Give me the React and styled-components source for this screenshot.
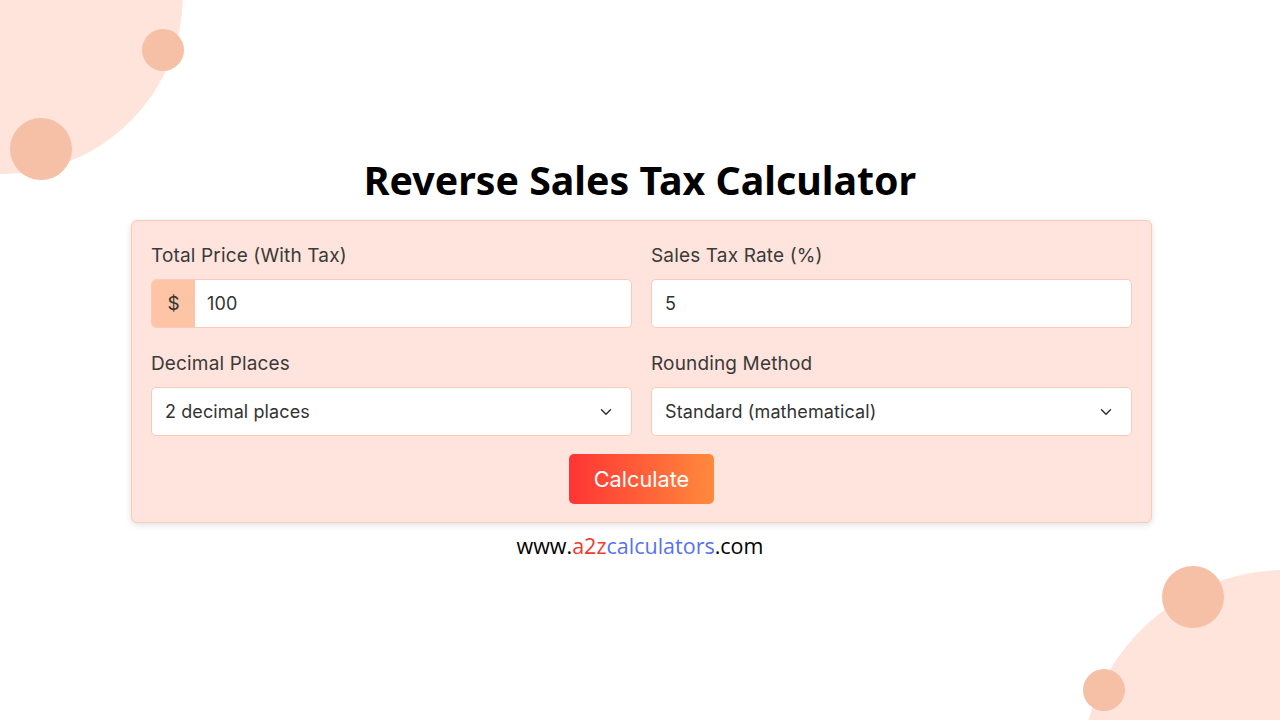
import React from "react";
import styled, { createGlobalStyle } from "styled-components";
import { ChevronDown } from "lucide-react";

const GlobalStyle = createGlobalStyle`
  html, body {
    margin: 0;
    padding: 0;
    background: #ffffff;
    font-family: "Inter", "Noto Sans", sans-serif;
  }
  * { box-sizing: border-box; }
`;

const Page = styled.div`
  position: relative;
  width: 1280px;
  height: 720px;
  overflow: hidden;
  display: flex;
  flex-direction: column;
  align-items: center;
  padding-top: 156px;
  background: #ffffff;
`;

const Blob = styled.div`
  position: absolute;
  border-radius: 50%;
  background: ${({ dark }) => (dark ? "#f5c0a5" : "#fee4da")};
  left: ${({ x, r }) => x - r}px;
  top: ${({ y, r }) => y - r}px;
  width: ${({ r }) => r * 2}px;
  height: ${({ r }) => r * 2}px;
`;

const Title = styled.h1`
  position: relative;
  margin: 0 0 16px;
  font-family: "Noto Sans", "Open Sans", sans-serif;
  font-weight: 700;
  font-size: 39.3px;
  line-height: 48px;
  color: #000000;
`;

const Card = styled.div`
  position: relative;
  width: 1021px;
  margin-left: 3px;
  background: #fee4dc;
  border: 1px solid #f9cbb8;
  border-radius: 6px;
  box-shadow: 0 2px 6px rgba(0, 0, 0, 0.12);
  padding: 23px 19px 18px;
`;

const Grid = styled.div`
  display: grid;
  grid-template-columns: 1fr 1fr;
  column-gap: 19px;
  row-gap: 24px;
`;

const Field = styled.div`
  display: flex;
  flex-direction: column;
`;

const Label = styled.label`
  font-size: 19px;
  letter-spacing: 0.15px;
  line-height: 24px;
  color: #3a3a3a;
  margin-bottom: 11px;
`;

const Box = styled.div`
  display: flex;
  align-items: center;
  height: 49px;
  background: #ffffff;
  border: 1px solid #fbcab6;
  border-radius: 5px;
  overflow: hidden;
`;

const Prefix = styled.span`
  display: flex;
  align-items: center;
  justify-content: center;
  width: 43px;
  height: 100%;
  background: #fec4a6;
  font-size: 19px;
  color: #333333;
`;

const Value = styled.span`
  flex: 1;
  padding: 0 ${({ tight }) => (tight ? "12px" : "13px")};
  font-size: 18px;
  letter-spacing: 0.1px;
  color: #333333;
`;

const Chevron = styled(ChevronDown)`
  margin-right: 16px;
  color: #333333;
`;

const Actions = styled.div`
  display: flex;
  justify-content: center;
  margin-top: 18px;
`;

const Button = styled.button`
  width: 145px;
  height: 50px;
  border: none;
  border-radius: 5px;
  background: linear-gradient(90deg, #ff3434 0%, #ff8a3d 100%);
  color: #ffffff;
  font-family: "Inter", "Noto Sans", sans-serif;
  font-size: 21.7px;
  cursor: pointer;
`;

const Footer = styled.div`
  position: relative;
  margin-top: 10px;
  font-family: "Open Sans", "Noto Sans", sans-serif;
  font-size: 21.5px;
  line-height: 26px;
  color: #000000;
`;

const Brand = styled.span`
  color: ${({ tone }) => tone};
`;

export default function App() {
  return (
    <>
      <GlobalStyle />
      <Page>
        <Blob x={3} y={-6} r={180} />
        <Blob dark x={163} y={50} r={21} />
        <Blob dark x={41} y={149} r={31} />
        <Blob x={1286} y={775} r={205} />
        <Blob dark x={1193} y={597} r={31} />
        <Blob dark x={1104} y={690} r={21} />

        <Title>Reverse Sales Tax Calculator</Title>
        <Card>
          <Grid>
            <Field>
              <Label>Total Price (With Tax)</Label>
              <Box>
                <Prefix>$</Prefix>
                <Value tight>100</Value>
              </Box>
            </Field>
            <Field>
              <Label>Sales Tax Rate (%)</Label>
              <Box>
                <Value>5</Value>
              </Box>
            </Field>
            <Field>
              <Label>Decimal Places</Label>
              <Box>
                <Value>2 decimal places</Value>
                <Chevron size={18} strokeWidth={2} />
              </Box>
            </Field>
            <Field>
              <Label>Rounding Method</Label>
              <Box>
                <Value>Standard (mathematical)</Value>
                <Chevron size={18} strokeWidth={2} />
              </Box>
            </Field>
          </Grid>
          <Actions>
            <Button>Calculate</Button>
          </Actions>
        </Card>
        <Footer>
          www.<Brand tone="#f2392f">a2z</Brand>
          <Brand tone="#5672ef">calculators</Brand>.com
        </Footer>
      </Page>
    </>
  );
}
